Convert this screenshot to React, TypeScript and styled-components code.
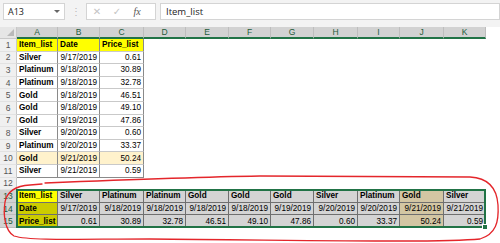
import React from "react";
import styled, { createGlobalStyle } from "styled-components";

const GlobalStyle = createGlobalStyle`
  html, body { margin: 0; padding: 0; background: #fff; }
  body { font-family: "Liberation Sans", Arial, sans-serif; }
`;

const GREEN = "#217346";
const COLS = ["A", "B", "C", "D", "E", "F", "G", "H", "I", "J", "K"];
const WIDTHS = [41, 42, 44, 42, 43, 42, 43, 44, 42, 44, 42];

type CellData = { v: string; bold?: boolean; right?: boolean; fill?: string };

const upper: [string, string, string][] = [
  ["Silver", "9/17/2019", "0.61"],
  ["Platinum", "9/18/2019", "30.89"],
  ["Platinum", "9/18/2019", "32.78"],
  ["Gold", "9/18/2019", "46.51"],
  ["Gold", "9/18/2019", "49.10"],
  ["Gold", "9/19/2019", "47.86"],
  ["Silver", "9/20/2019", "0.60"],
  ["Platinum", "9/20/2019", "33.37"],
  ["Gold", "9/21/2019", "50.24"],
  ["Silver", "9/21/2019", "0.59"],
];

// builds the 15 x 11 grid of cells
const buildRows = (): (CellData | null)[][] => {
  const rows: (CellData | null)[][] = [];
  rows.push([
    { v: "Item_list", bold: true, fill: "#ffff00" },
    { v: "Date", bold: true, fill: "#ffff00" },
    { v: "Price_list", bold: true, fill: "#ffff00" },
  ]);
  upper.forEach((r, i) => {
    const fill = i === 8 ? "#fff2cc" : "#fff";
    rows.push([
      { v: r[0], bold: true, fill },
      { v: r[1], right: true, fill },
      { v: r[2], right: true, fill },
    ]);
  });
  rows.push([]);
  const sel = (i: number) => (i === 8 ? "#d3c6a3" : "#d4d4d4");
  rows.push([
    { v: "Item_list", bold: true, fill: "#ffff00" },
    ...upper.map((r, i) => ({ v: r[0], bold: true, fill: sel(i) })),
  ]);
  rows.push([
    { v: "Date", bold: true, fill: "#cccc00" },
    ...upper.map((r, i) => ({ v: r[1], right: true, fill: sel(i) })),
  ]);
  rows.push([
    { v: "Price_list", bold: true, fill: "#cccc00" },
    ...upper.map((r, i) => ({ v: r[2], right: true, fill: sel(i) })),
  ]);
  return rows;
};

const Screen = styled.div`
  position: relative;
  width: 500px;
  height: 243px;
  overflow: hidden;
  background: #fff;
`;

const FormulaBar = styled.div`
  display: flex;
  align-items: center;
  height: 27px;
  padding: 0 0 5px 3px;
  box-sizing: border-box;
  background: #f3f3f3;
  font-size: 9px;
  color: #333;
`;

const Box = styled.div<{ $w?: number; $gap?: number }>`
  display: flex;
  align-items: center;
  height: 17px;
  box-sizing: border-box;
  background: #fff;
  border: 1px solid #d4d4d4;
  margin-left: ${(p) => p.$gap || 0}px;
  ${(p) => (p.$w ? `width: ${p.$w}px;` : "flex: 1;")}
`;

const NameText = styled.span`
  flex: 1;
  padding-left: 4px;
  font-family: "Open Sans", "Liberation Sans", sans-serif;
  font-size: 9px;
  color: #222;
`;

const Caret = styled.span`
  width: 0;
  height: 0;
  margin-right: 4px;
  border-left: 3px solid transparent;
  border-right: 3px solid transparent;
  border-top: 3px solid #666;
`;

const Dots = styled.span`
  width: 21px;
  text-align: center;
  color: #b8b8b8;
  font-size: 10px;
`;

const FnButton = styled.span<{ $dark?: boolean }>`
  width: 20px;
  text-align: center;
  color: ${(p) => (p.$dark ? "#555" : "#c4c4c4")};
  font-size: 10px;
  font-family: ${(p) => (p.$dark ? '"Liberation Serif", serif' : '"DejaVu Sans", sans-serif')};
  font-style: ${(p) => (p.$dark ? "italic" : "normal")};
`;

const Formula = styled.span`
  padding-left: 5px;
  font-family: "Open Sans", "Liberation Sans", sans-serif;
  font-size: 9.5px;
  color: #222;
`;

const Sheet = styled.div`
  display: grid;
  grid-template-columns: 17px ${WIDTHS.map((w) => `${w}px`).join(" ")} 1fr;
  grid-template-rows: 12px repeat(15, 12.6px);
  font-size: 8.2px;
  color: #000;
`;

type Pos = { $r: number; $c: number };

const Corner = styled.div`
  grid-row: 1;
  grid-column: 1;
  position: relative;
  background: #e6e6e6;
  border-right: 1px solid #c8c8c8;
  border-bottom: 1px solid #c8c8c8;
  &::after {
    content: "";
    position: absolute;
    right: 2px;
    bottom: 2px;
    border-left: 7px solid transparent;
    border-bottom: 7px solid #b9b9b9;
  }
`;

const ColHead = styled.div<{ $sel?: boolean; $c: number }>`
  grid-row: 1;
  grid-column: ${(p) => p.$c};
  display: flex;
  align-items: center;
  justify-content: center;
  box-sizing: border-box;
  background: ${(p) => (p.$sel ? "#d2d2d2" : "#fff")};
  border-right: 1px solid ${(p) => (p.$sel ? "#bdbdbd" : "transparent")};
  border-bottom: 2px solid ${(p) => (p.$sel ? GREEN : "transparent")};
  color: ${(p) => (p.$sel ? "#1e5b3a" : "#555")};
  font-size: 8.5px;
`;

const RowHead = styled.div<{ $sel?: boolean; $r: number }>`
  grid-row: ${(p) => p.$r};
  grid-column: 1;
  display: flex;
  align-items: center;
  justify-content: center;
  box-sizing: border-box;
  background: ${(p) => (p.$sel ? "#d2d2d2" : "#f0f0f0")};
  border-right: 1px solid #c8c8c8;
  border-bottom: 1px solid ${(p) => (p.$sel ? "#bdbdbd" : "#e2e2e2")};
  color: ${(p) => (p.$sel ? "#1e5b3a" : "#555")};
  font-size: 8.5px;
`;

const Cell = styled.div<Pos & { $fill?: string; $bold?: boolean; $right?: boolean; $rb?: string; $bb?: string }>`
  grid-row: ${(p) => p.$r};
  grid-column: ${(p) => p.$c};
  display: flex;
  align-items: center;
  justify-content: ${(p) => (p.$right ? "flex-end" : "flex-start")};
  box-sizing: border-box;
  padding: 0 2px;
  overflow: hidden;
  white-space: nowrap;
  background: ${(p) => p.$fill || "#fff"};
  font-weight: ${(p) => (p.$bold ? 700 : 400)};
  border-right: 1px solid ${(p) => p.$rb || "transparent"};
  border-bottom: 1px solid ${(p) => p.$bb || "transparent"};
`;

const Selection = styled.div`
  grid-row: 14 / span 3;
  grid-column: 2 / span 11;
  position: relative;
  z-index: 1;
  margin: -1px 0 0 -1px;
  border: 2px solid ${GREEN};
  pointer-events: none;
  &::after {
    content: "";
    position: absolute;
    right: -4px;
    bottom: -4px;
    width: 4px;
    height: 4px;
    background: ${GREEN};
    border: 1px solid #fff;
  }
`;

const Annotation = styled.svg`
  position: absolute;
  left: 0;
  top: 0;
  z-index: 2;
  pointer-events: none;
`;

export default function App() {
  const rows = buildRows();
  return (
    <Screen>
      <GlobalStyle />
      <FormulaBar>
        <Box $w={62}>
          <NameText>A13</NameText>
          <Caret />
        </Box>
        <Dots>⋮</Dots>
        <Box $w={70}>
          <FnButton>✕</FnButton>
          <FnButton>✓</FnButton>
          <FnButton $dark>fx</FnButton>
        </Box>
        <Box $gap={4}>
          <Formula>Item_list</Formula>
        </Box>
      </FormulaBar>
      <Sheet>
        <Corner />
        {COLS.map((c, i) => (
          <ColHead key={c} $c={i + 2} $sel>
            {c}
          </ColHead>
        ))}
        <ColHead $c={13} />
        {rows.map((row, r) => {
          const n = r + 1;
          const gr = n + 1;
          const inUpper = n <= 11;
          const inLower = n >= 13;
          return (
            <React.Fragment key={n}>
              <RowHead $r={gr} $sel={inLower}>
                {n}
              </RowHead>
              {COLS.map((_, c) => {
                const d = row[c];
                let rb: string | undefined;
                let bb: string | undefined;
                if (inUpper && c < 3) {
                  rb = "#8a8a8a";
                  bb = n === 11 ? "#8a8a8a" : "#c9c9c9";
                }
                if (inLower) {
                  rb = "#6f6f6f";
                  bb = "#6f6f6f";
                }
                if (n === 12) bb = "#6f6f6f";
                return (
                  <Cell
                    key={c}
                    $r={gr}
                    $c={c + 2}
                    $fill={d?.fill}
                    $bold={d?.bold}
                    $right={d?.right}
                    $rb={rb}
                    $bb={bb}
                  >
                    {d?.v}
                  </Cell>
                );
              })}
              <Cell $r={gr} $c={13} />
            </React.Fragment>
          );
        })}
        <Selection />
      </Sheet>
      <Annotation width="500" height="243" viewBox="0 0 500 243">
        <path
          d="M 45 183 C 120 180, 200 177, 260 176 C 340 176, 420 177, 470 177 C 490 178, 497 190, 498 205 C 499 222, 496 234, 480 239 C 440 243, 300 240, 150 239 C 80 239, 30 241, 14 236 C 5 231, 3 215, 5 202 C 7 192, 14 186, 30 185 L 42 184"
          fill="none"
          stroke="#e4262b"
          strokeWidth="1.3"
          strokeLinecap="round"
        />
      </Annotation>
    </Screen>
  );
}
